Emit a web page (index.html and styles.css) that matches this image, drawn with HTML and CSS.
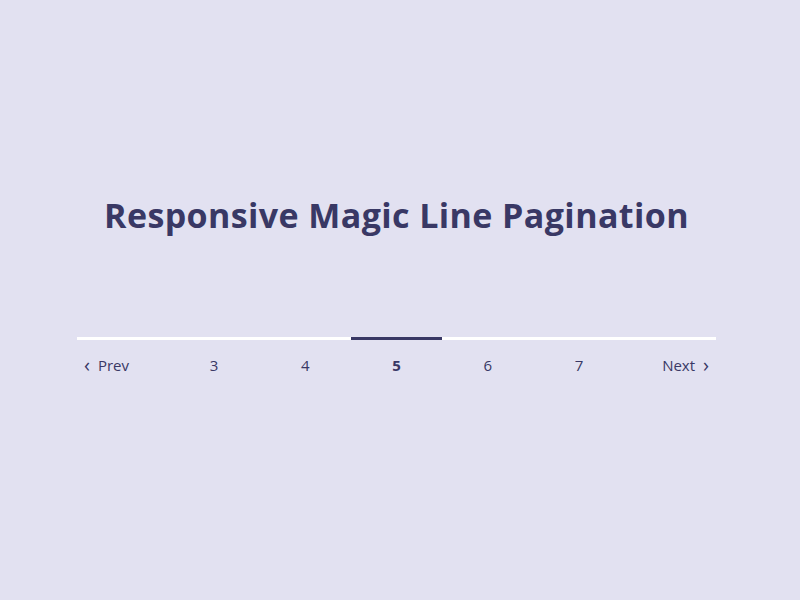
FILE: index.html
```html
<!DOCTYPE html>
<html lang="en">
<head>
  <meta charset="UTF-8" />
  <title>Responsive Magic Line Pagination</title>
  <link rel="stylesheet" href="styles.css">
</head>
<body>
  <h1>Responsive Magic Line Pagination</h1>

  <nav class="pagination">
    <a href="#" class="page prev"><span class="chev">&lsaquo;</span> Prev</a>
    <a href="#" class="page">3</a>
    <a href="#" class="page">4</a>
    <a href="#" class="page active">5</a>
    <a href="#" class="page">6</a>
    <a href="#" class="page">7</a>
    <a href="#" class="page next">Next <span class="chev">&rsaquo;</span></a>
  </nav>
</body>
</html>
```

FILE: styles.css
```css
:root {
  --bg: #e2e1f1;
  --ink: #393865;
  --line: #ffffff;
}

* {
  box-sizing: border-box;
}

body {
  margin: 0;
  padding: 195px 84px 0 77px;
  font-family: 'Open Sans', sans-serif;
  background: var(--bg);
  color: var(--ink);
  min-height: 600px;
}

h1 {
  margin: 0 0 102px;
  text-align: center;
  font-size: 34px;
  font-weight: 700;
  line-height: 40px;
  letter-spacing: 0.4px;
}

.pagination {
  display: grid;
  grid-template-columns: repeat(7, 1fr);
  width: 639px;
}

.page {
  display: block;
  border-top: 3px solid var(--line);
  padding: 15px 7px 0;
  text-align: center;
  font-size: 15px;
  font-weight: 400;
  color: var(--ink);
  text-decoration: none;
  line-height: 20px;
}

.page.active {
  border-top-color: var(--ink);
  font-weight: 700;
}

.page.prev {
  text-align: left;
}

.page.next {
  text-align: right;
}

.chev {
  display: inline-block;
  font-size: 20px;
  line-height: 16px;
  margin: 0 4px;
  vertical-align: -1px;
}

.prev .chev {
  margin-left: 0;
}

.next .chev {
  margin-right: 0;
}
```
